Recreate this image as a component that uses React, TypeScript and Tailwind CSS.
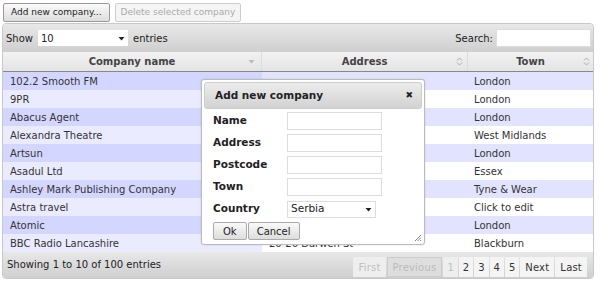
import React from "react"

const rows = [
  ["102.2 Smooth FM", "London"],
  ["9PR", "London"],
  ["Abacus Agent", "London"],
  ["Alexandra Theatre", "West Midlands"],
  ["Artsun", "London"],
  ["Asadul Ltd", "Essex"],
  ["Ashley Mark Publishing Company", "Tyne & Wear"],
  ["Astra travel", "Click to edit"],
  ["Atomic", "London"],
  ["BBC Radio Lancashire", "Blackburn"],
]

function SortBoth() {
  return (
    <svg width="7" height="9" viewBox="0 0 7 9" className="text-[#aaa]">
      <path d="M1 3.5 L3.5 1 L6 3.5" fill="none" stroke="currentColor" strokeWidth="1" />
      <path d="M1 5.5 L3.5 8 L6 5.5" fill="none" stroke="currentColor" strokeWidth="1" />
    </svg>
  )
}

function Caret({ dark }: { dark?: boolean }) {
  return (
    <svg width="7" height="5" viewBox="0 0 7 5" className={dark ? "text-[#222]" : "text-[#bbb]"}>
      <path d="M0.5 1 L6.5 1 L3.5 4.5 Z" fill="currentColor" />
    </svg>
  )
}

const field = "h-[18px] w-[95px] border border-[#ddd] bg-white"
const pageBtn = "px-[5px] flex items-center tracking-[0.2px]"
const numBtn = "px-[4px] flex items-center"

export default function App() {
  return (
    <div className="relative w-[600px] h-[284px] bg-white font-['DejaVu_Sans',sans-serif] text-[10px] text-[#333]">
      <div className="flex gap-[5px] px-[3px] pt-[3px] h-[23px] text-[9px]">
        <button className="h-[19px] px-[7px] border border-[#999] rounded-[2px] bg-gradient-to-b from-[#fafafa] to-[#ddd] text-[#222]">
          Add new company...
        </button>
        <button className="h-[19px] px-[5px] border border-[#ccc] rounded-[2px] bg-[#f4f4f4] text-[#aaa]">
          Delete selected company
        </button>
      </div>

      <div className="mx-[2px] w-[592px] border border-[#c8c8c8] rounded-[4px] overflow-hidden">
        <div className="h-[28px] flex items-center justify-between pl-[3px] pr-[2px] bg-gradient-to-b from-[#e8e8e8] to-[#cfcfcf]">
          <div className="flex items-center gap-[5px] text-[#222]">
            <span>Show</span>
            <div className="w-[90px] h-[16px] bg-white flex items-center justify-between px-[3px]">
              <span>10</span>
              <Caret dark />
            </div>
            <span>entries</span>
          </div>
          <div className="flex items-center gap-[3px] text-[#222]">
            <span>Search:</span>
            <div className="w-[95px] h-[18px] bg-white border border-[#ddd]" />
          </div>
        </div>

        <div className="flex h-[20px] bg-gradient-to-b from-[#f2f2f2] to-[#e4e4e4] border-b border-[#888] font-bold text-[#444]">
          <div className="w-[259px] flex items-center justify-center relative border-r border-[#ddd]">
            Company name
            <span className="absolute right-[6px] top-[7px]"><Caret /></span>
          </div>
          <div className="w-[206px] flex items-center justify-center relative border-r border-[#ddd]">
            Address
            <span className="absolute right-[4px] top-[5px]"><SortBoth /></span>
          </div>
          <div className="flex-1 flex items-center justify-center relative">
            Town
            <span className="absolute right-[3px] top-[5px]"><SortBoth /></span>
          </div>
        </div>

        {rows.map(([name, town], i) => (
          <div key={name} className={`flex h-[18px] items-center ${i % 2 === 0 ? "bg-[#e2e4ff]" : "bg-white"}`}>
            <div className={`w-[259px] h-full flex items-center pl-[7px] ${i % 2 === 0 ? "bg-[#d3d6ff]" : "bg-[#eaebff]"}`}>
              {name}
            </div>
            <div className="w-[206px] h-full flex items-center pl-[7px]">{i === 9 ? "20-26 Darwen St" : ""}</div>
            <div className="flex-1 h-full flex items-center pl-[6px]">{town}</div>
          </div>
        ))}

        <div className="h-[26px] flex items-end justify-between pl-[4px] pr-[6px] pb-[1px] bg-gradient-to-b from-[#e8e8e8] to-[#cfcfcf] text-[#222]">
          <span className="self-center">Showing 1 to 10 of 100 entries</span>
          <div className="flex h-[20px] gap-[1px]">
            <span className={`${pageBtn} bg-[#eeeeee] text-[#c0c0c0]`}>First</span>
            <span className={`${pageBtn} bg-[#dedede] border border-[#ccc] text-[#bbb]`}>Previous</span>
            <span className={`${numBtn} bg-[#eeeeee] text-[#c0c0c0]`}>1</span>
            <span className={`${numBtn} bg-[#f4f4f4] text-[#333]`}>2</span>
            <span className={`${numBtn} bg-[#f4f4f4] text-[#333]`}>3</span>
            <span className={`${numBtn} bg-[#f4f4f4] text-[#333]`}>4</span>
            <span className={`${numBtn} bg-[#f4f4f4] text-[#333]`}>5</span>
            <span className={`${pageBtn} bg-[#f4f4f4] text-[#333]`}>Next</span>
            <span className={`${pageBtn} bg-[#f4f4f4] text-[#333]`}>Last</span>
          </div>
        </div>
      </div>

      <div className="absolute left-[201px] top-[79px] w-[224px] h-[166px] bg-white border border-[#bbb] rounded-[3px] p-[2px] shadow-[0_0_2px_rgba(0,0,0,0.15)]">
        <div className="h-[27px] flex items-center justify-between pl-[10px] pr-[8px] rounded-[3px] border border-[#ccc] bg-gradient-to-b from-[#ececec] to-[#d2d2d2] font-bold text-[10.5px] text-[#222]">
          <span>Add new company</span>
          <span className="text-[9px]">✖</span>
        </div>
        <div className="flex flex-col gap-[4px] pl-[9px] pt-[3px] font-bold text-[10.5px] text-[#222]">
          {["Name", "Address", "Postcode", "Town"].map((l) => (
            <div key={l} className="flex items-center h-[18px]">
              <span className="w-[74px]">{l}</span>
              <div className={field} />
            </div>
          ))}
          <div className="flex items-center h-[18px]">
            <span className="w-[74px]">Country</span>
            <div className="w-[89px] h-[17px] border border-[#ddd] flex items-center justify-between px-[3px] font-normal">
              <span>Serbia</span>
              <Caret dark />
            </div>
          </div>
          <div className="flex gap-[1px] font-normal text-[10px]">
            <button className="h-[18px] px-[9px] border border-[#aaa] rounded-[2px] bg-gradient-to-b from-[#fafafa] to-[#ddd]">Ok</button>
            <button className="h-[18px] px-[8px] border border-[#aaa] rounded-[2px] bg-gradient-to-b from-[#fafafa] to-[#ddd]">Cancel</button>
          </div>
        </div>
        <svg className="absolute right-[2px] bottom-[2px]" width="8" height="8" viewBox="0 0 8 8">
          <path d="M7 1 L1 7 M7 3.5 L3.5 7 M7 6 L6 7" stroke="#888" strokeWidth="1" />
        </svg>
      </div>
    </div>
  )
}
